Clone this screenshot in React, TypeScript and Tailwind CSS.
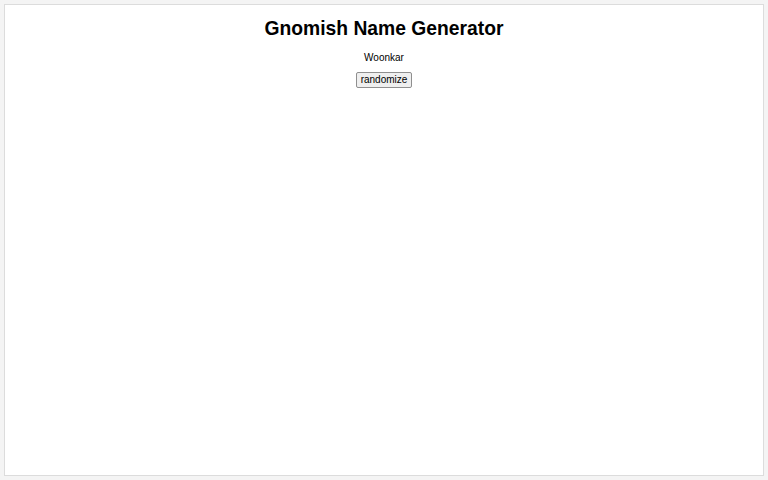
import { useState } from "react";

const names = ["Woonkar", "Bimble", "Fizzwick", "Nackle", "Tobbin", "Glimnor"];

export default function App() {
  const [name, setName] = useState("Woonkar");

  const randomize = () => {
    setName(names[Math.floor(Math.random() * names.length)]);
  };

  return (
    <div className="h-[480px] bg-[#f4f4f4] p-[4px] font-['Liberation_Sans',Arial,sans-serif] text-black">
      <div className="flex h-full flex-col items-center border border-[#dcdcdc] bg-white">
        <h1 className="mt-[12px] text-[19.3px] font-bold leading-[24px]">Gnomish Name Generator</h1>
        <p className="mt-[11px] text-[10px] leading-[12px]">{name}</p>
        <button
          onClick={randomize}
          className="mt-[8px] h-[16px] rounded-[2px] border border-[#8f8f8f] bg-[#efefef] px-[4px] text-[10px] leading-[12px]"
        >
          randomize
        </button>
      </div>
    </div>
  );
}
